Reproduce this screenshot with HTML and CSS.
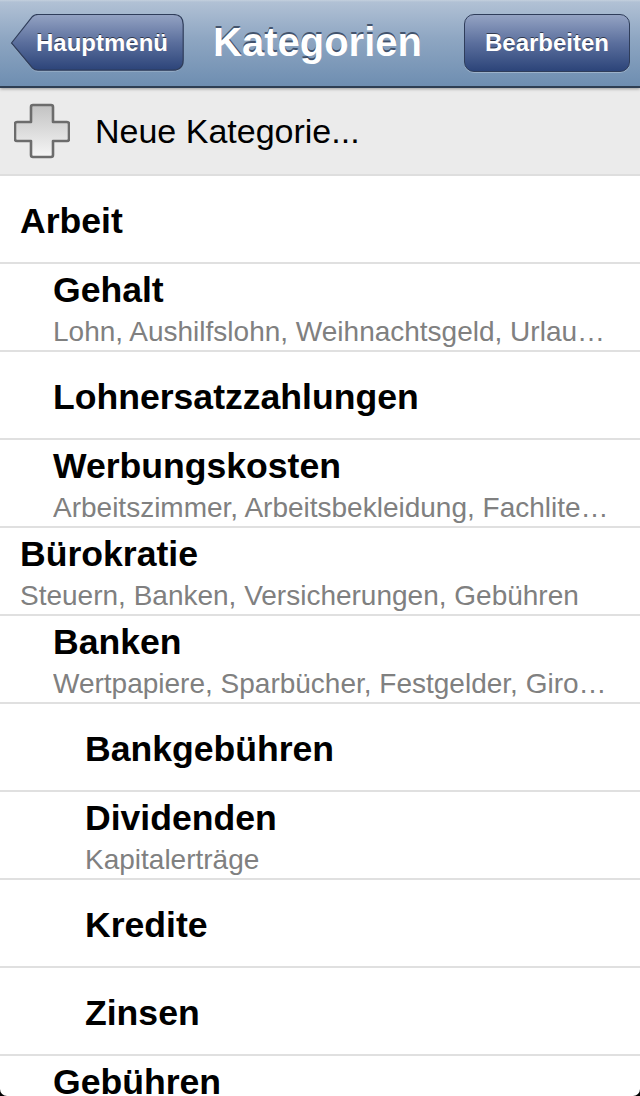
FILE: index.html
```html
<!DOCTYPE html>
<html lang="de">
<head>
<meta charset="utf-8">
<title>Kategorien</title>
<link rel="stylesheet" href="styles.css">
</head>
<body>
<div class="screen">
  <header class="navbar">
    <a class="back-btn">
      <svg class="back-bg" viewBox="0 0 174 58" width="174" height="58" aria-hidden="true">
        <defs>
          <linearGradient id="bg1" x1="0" y1="0" x2="0" y2="1">
            <stop offset="0" stop-color="#94a3c3"/>
            <stop offset="0.5" stop-color="#5b6f9d"/>
            <stop offset="1" stop-color="#2c4479"/>
          </linearGradient>
        </defs>
        <path d="M1.5 29.5 L22.5 3 Q24.5 0.8 28 0.8 H163 Q173.2 0.8 173.2 11 V46.5 Q173.2 56.7 163 56.7 H28 Q24.5 56.7 22.5 54.5 Z" fill="rgba(255,255,255,0.25)" transform="translate(0,1)"/>
        <path d="M1.5 29 L22.5 2.5 Q24.5 0.5 28 0.5 H163 Q173.2 0.5 173.2 10.5 V46 Q173.2 56.2 163 56.2 H28 Q24.5 56.2 22.5 54 Z" fill="url(#bg1)" stroke="#2f3d5a" stroke-width="1.2"/>
      </svg>
      <span class="btn-label">Hauptmenü</span>
    </a>
    <h1 class="nav-title">Kategorien</h1>
    <a class="edit-btn"><span class="btn-label">Bearbeiten</span></a>
  </header>

  <div class="add-row">
    <svg class="plus" viewBox="0 0 56 56" width="56" height="56" aria-hidden="true">
      <defs>
        <linearGradient id="pg" x1="0" y1="0" x2="0" y2="1">
          <stop offset="0" stop-color="#c2c2c2"/>
          <stop offset="1" stop-color="#f6f6f6"/>
        </linearGradient>
      </defs>
      <path d="M19 2 H37 Q39 2 39 4 V19 H53 Q55 19 55 21 V36 Q55 38 53 38 H39 V52 Q39 54 37 54 H19 Q17 54 17 52 V38 H3 Q1 38 1 36 V21 Q1 19 3 19 H17 V4 Q17 2 19 2 Z" fill="url(#pg)" stroke="#6c6c6c" stroke-width="2.6" stroke-linejoin="round"/>
    </svg>
    <span class="add-label">Neue Kategorie...</span>
  </div>

  <ul class="list">
    <li class="row lvl0"><span class="title">Arbeit</span></li>
    <li class="row lvl1 has-sub"><span class="title">Gehalt</span><span class="sub">Lohn, Aushilfslohn, Weihnachtsgeld, Urlaubsgeld</span></li>
    <li class="row lvl1"><span class="title">Lohnersatzzahlungen</span></li>
    <li class="row lvl1 has-sub"><span class="title">Werbungskosten</span><span class="sub">Arbeitszimmer, Arbeitsbekleidung, Fachliteratur</span></li>
    <li class="row lvl0 has-sub"><span class="title">Bürokratie</span><span class="sub">Steuern, Banken, Versicherungen, Gebühren</span></li>
    <li class="row lvl1 has-sub"><span class="title">Banken</span><span class="sub">Wertpapiere, Sparbücher, Festgelder, Girokonto</span></li>
    <li class="row lvl2"><span class="title">Bankgebühren</span></li>
    <li class="row lvl2 has-sub"><span class="title">Dividenden</span><span class="sub">Kapitalerträge</span></li>
    <li class="row lvl2"><span class="title">Kredite</span></li>
    <li class="row lvl2"><span class="title">Zinsen</span></li>
    <li class="row lvl1 has-sub"><span class="title">Gebühren</span><span class="sub">Rundfunkbeitrag, Verwaltungsgebühren</span></li>
  </ul>
</div>
</body>
</html>
```

FILE: styles.css
```css
* { box-sizing: border-box; }

html, body {
  margin: 0;
  padding: 0;
  background: #000;
}

body {
  font-family: "Liberation Sans", Arial, sans-serif;
  width: 640px;
  height: 1096px;
  overflow: hidden;
}

.screen {
  width: 640px;
  height: 1096px;
  background: #fff;
  overflow: hidden;
  border-radius: 0 0 7px 7px;
}

.navbar {
  position: relative;
  z-index: 2;
  height: 88px;
  display: flex;
  align-items: center;
  padding: 0 10px 2px 10px;
  background: linear-gradient(to bottom, #c4d0de 0, #b1c1d5 2px, #8ea6c2 45%, #6e8eb1 100%);
  border-bottom: 2px solid #2e3e53;
  box-shadow: 0 1px 3px rgba(0, 0, 0, 0.35);
}

.back-btn {
  position: relative;
  width: 174px;
  height: 58px;
  display: flex;
  align-items: center;
  justify-content: flex-start;
  padding-left: 26px;
  margin-top: 2px;
}

.back-bg {
  position: absolute;
  left: 0;
  top: 0;
}

.btn-label {
  position: relative;
  color: #fff;
  font-weight: bold;
  font-size: 24px;
  line-height: 28px;
  text-shadow: 0 -1px 0 rgba(0, 0, 0, 0.55);
}

.nav-title {
  margin: 0 0 0 29px;
  color: #fff;
  font-size: 40px;
  font-weight: bold;
  line-height: 46px;
  text-shadow: 0 -2px 0 rgba(40, 55, 80, 0.75);
}

.edit-btn {
  margin-left: auto;
  width: 166px;
  height: 58px;
  margin-top: 2px;
  display: flex;
  align-items: center;
  justify-content: center;
  border: 1.2px solid #2f3d5a;
  border-radius: 10px;
  background: linear-gradient(to bottom, #94a3c3 0%, #5b6f9d 50%, #2c4479 100%);
  box-shadow: 0 1px 0 rgba(255, 255, 255, 0.28);
}

.add-row {
  height: 88px;
  display: flex;
  align-items: center;
  background: #ebebeb;
  border-bottom: 2px solid #dedede;
  padding-left: 14px;
}

.plus {
  display: block;
}

.add-label {
  margin-left: 25px;
  font-size: 34px;
  color: #000;
  line-height: 40px;
}

.list {
  list-style: none;
  margin: 0;
  padding: 0;
}

.row {
  height: 88px;
  border-bottom: 2px solid #e0e0e0;
  display: flex;
  flex-direction: column;
  justify-content: center;
  padding-top: 3px;
  padding-right: 26px;
}

.row.has-sub {
  justify-content: flex-start;
  padding-top: 6px;
}

.lvl0 { padding-left: 20px; }
.lvl1 { padding-left: 53px; }
.lvl2 { padding-left: 85px; }

.title {
  font-size: 35.6px;
  font-weight: bold;
  line-height: 40px;
  color: #000;
  white-space: nowrap;
}

.sub {
  font-size: 28px;
  line-height: 32px;
  color: #808080;
  margin-top: 6px;
  white-space: nowrap;
  overflow: hidden;
  text-overflow: ellipsis;
}
```
